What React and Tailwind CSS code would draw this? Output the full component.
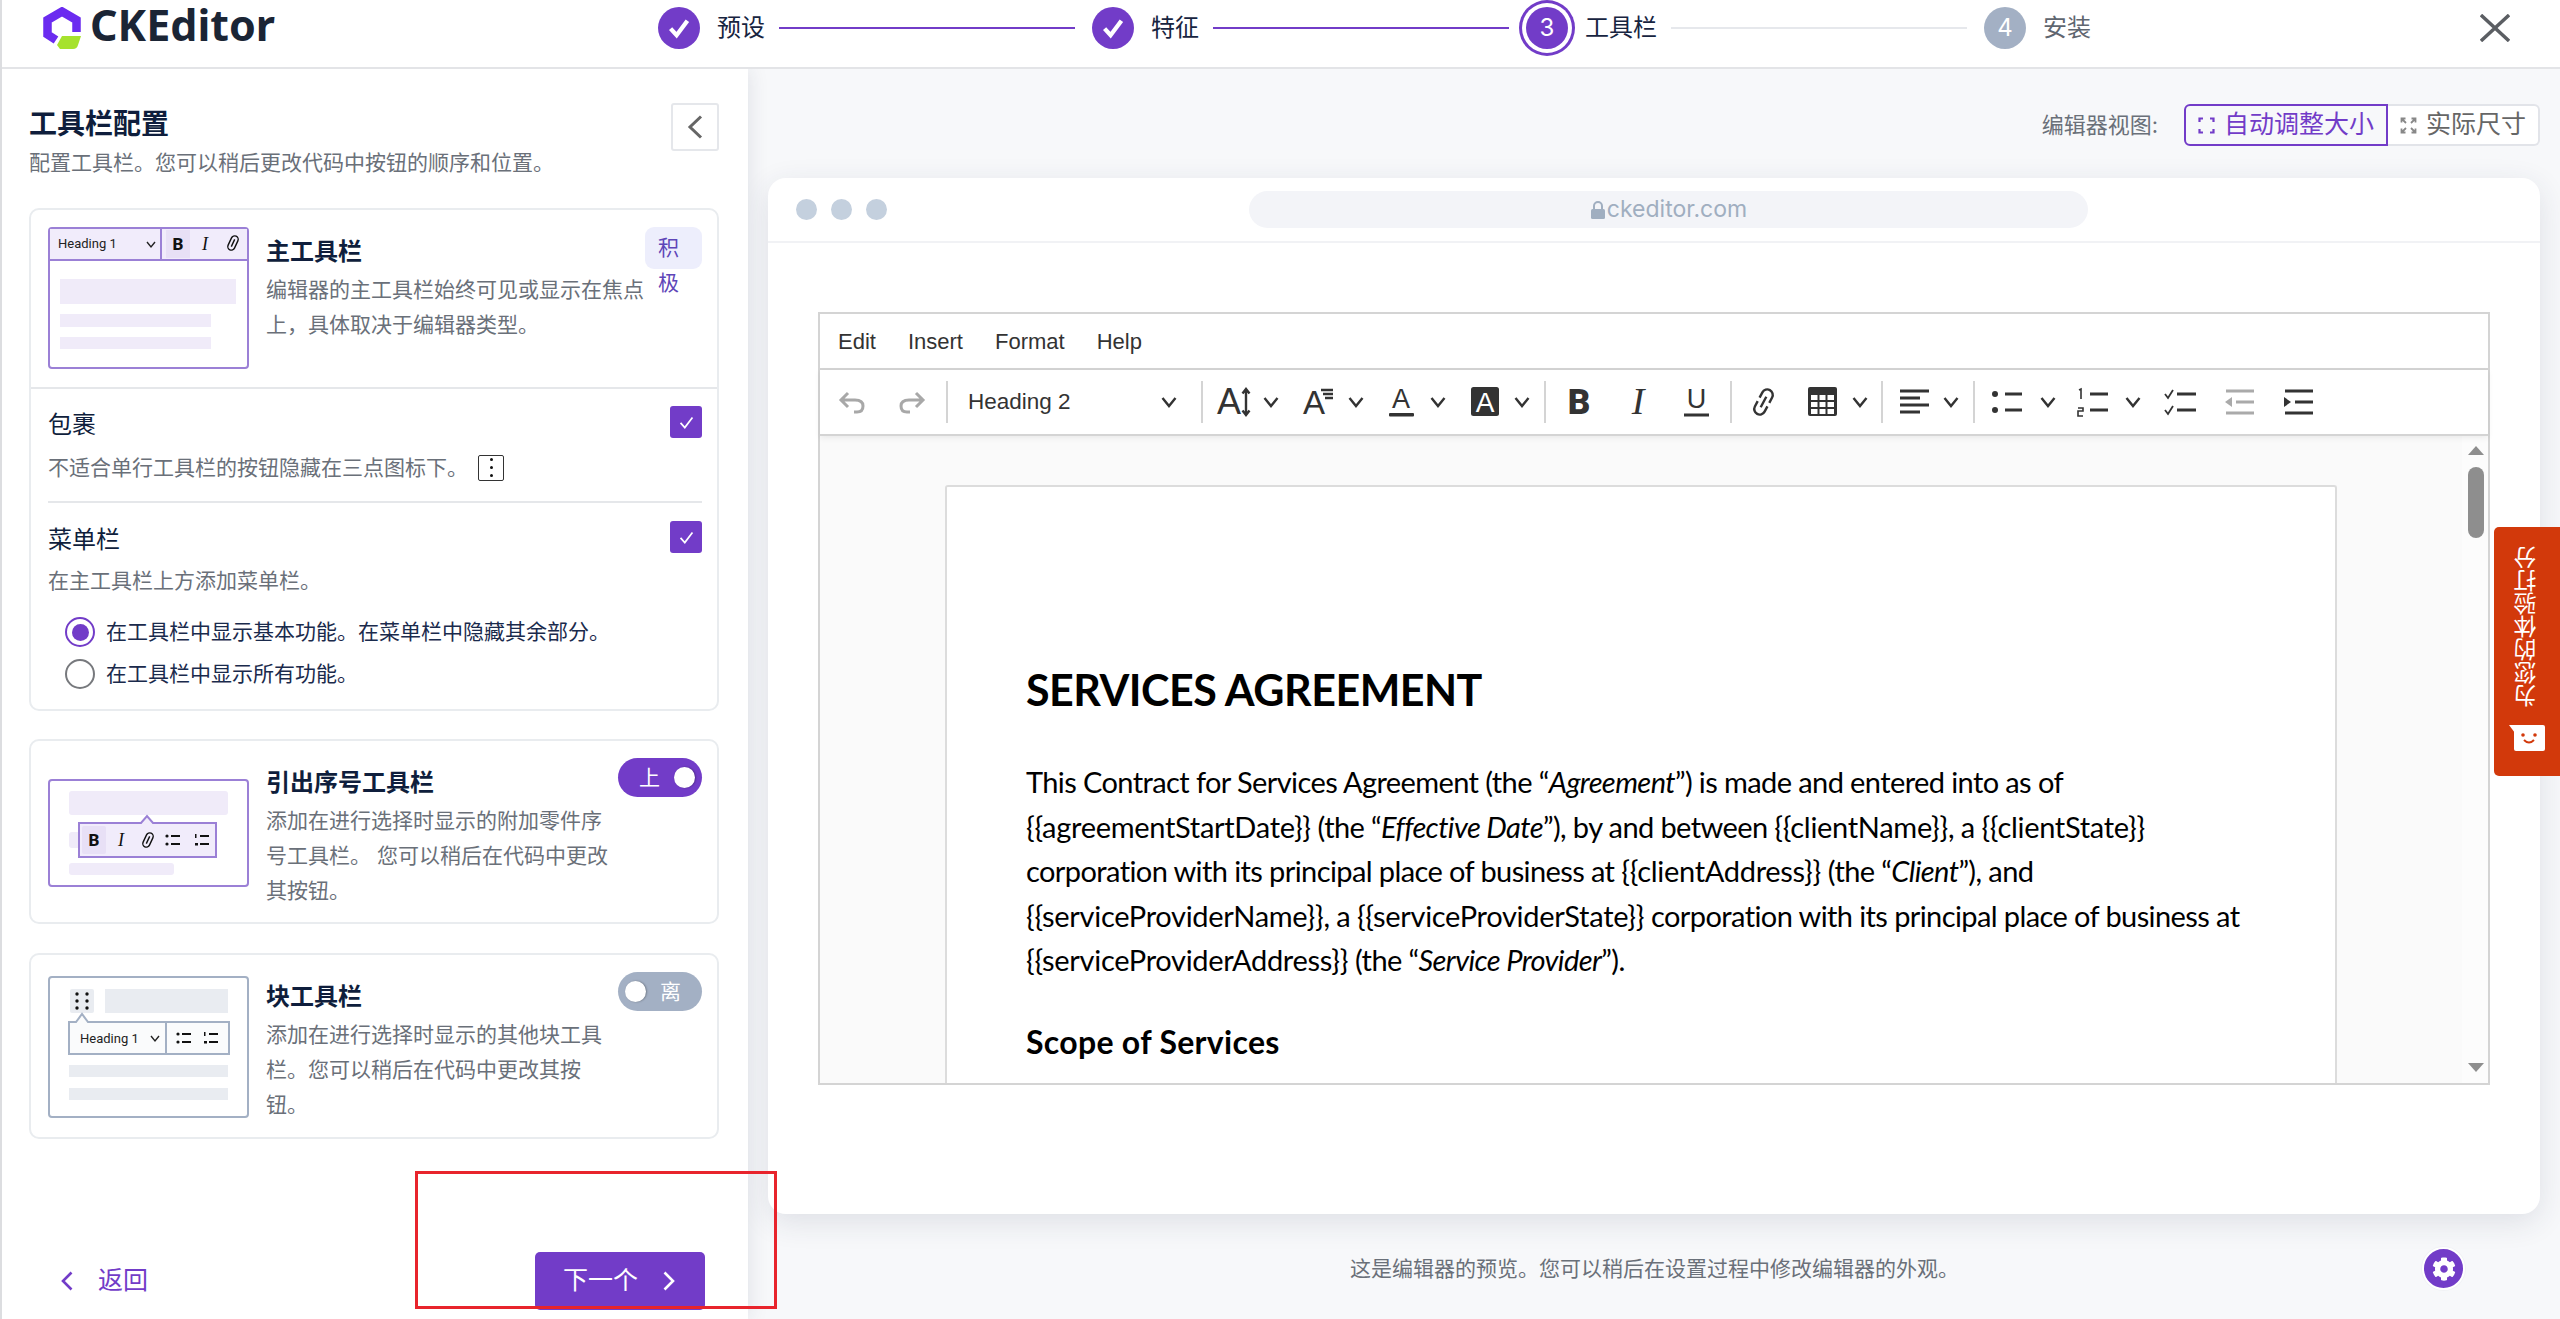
import { FaCog } from 'react-icons/fa'

const FONT = "font-['Inter','Noto_Sans_CJK_SC',sans-serif]"

function Chev({ className = '' }) {
  return (
    <svg width="16" height="30" viewBox="0 0 16 30" fill="none" className={className}>
      <path d="M1.5 11 L8 19 L14.5 11" stroke="#333" strokeWidth="2.4" />
    </svg>
  )
}

function Sep({ className = '' }) {
  return <div className={`w-[2px] h-[42px] bg-[#d4d4d4] shrink-0 ${className}`} />
}

function Ic({ w, className = '', children }) {
  return (
    <svg width={w} height="30" viewBox={`0 0 ${w} 30`} fill="none" className={`shrink-0 overflow-visible ${className}`}>
      {children}
    </svg>
  )
}

function Check({ size = 20, stroke = 3 }) {
  return (
    <svg width={size} height={size} viewBox="0 0 20 20" fill="none">
      <path d="M3 10.5 L8 16 L17 4" stroke="#fff" strokeWidth={stroke} />
    </svg>
  )
}

function Logo() {
  return (
    <svg width="38" height="42" viewBox="0 0 38 42" fill="none" className="shrink-0">
      <path d="M13 33 L4.5 27.5 V13 L19 4.5 L33.5 13 V25" stroke="#6b2bf0" strokeWidth="8.5" />
      <path d="M19 29 H38 L35 38 Q34 42 30 42 H17 L14 38 Z" fill="#a6e22d" />
    </svg>
  )
}

function Step({ n, label, state, line }) {
  return (
    <div className="flex items-center shrink-0">
      {state === 'done' && (
        <div className="w-[42px] h-[42px] rounded-full bg-[#723cc8] flex items-center justify-center">
          <Check size={24} stroke={3.6} />
        </div>
      )}
      {state === 'active' && (
        <div className="w-[42px] h-[42px] rounded-full bg-[#723cc8] text-white text-[24px] flex items-center justify-center shadow-[0_0_0_4px_#fff,0_0_0_7px_#723cc8]">
          {n}
        </div>
      )}
      {state === 'todo' && (
        <div className="w-[42px] h-[42px] rounded-full bg-[#a3b0c4] text-white text-[24px] flex items-center justify-center">
          {n}
        </div>
      )}
      <span className={`ml-[17px] text-[24px] leading-[42px] ${state === 'todo' ? 'text-[#5f6670]' : 'text-[#172440]'}`}>{label}</span>
      {line && <div className={`ml-[14px] mr-[17px] w-[296px] h-[2px] ${line === 'on' ? 'bg-[#723cc8]' : 'bg-[#e6e8ec]'}`} />}
    </div>
  )
}

function Header() {
  return (
    <header className="h-[69px] shrink-0 bg-white border-b-2 border-[#e3e4e7] flex items-start pt-[7px] relative z-20">
      <div className="w-[658px] pl-[43px] flex items-center h-[42px] shrink-0">
        <Logo />
        <span className="ml-[9px] text-[43px] font-bold text-[#1b2535] leading-[42px] -mt-[6px] font-['Noto_Sans',sans-serif]">CKEditor</span>
      </div>
      <Step label="预设" state="done" line="on" />
      <Step label="特征" state="done" line="on" />
      <Step n="3" label="工具栏" state="active" line="off" />
      <Step n="4" label="安装" state="todo" />
      <svg width="30" height="28" viewBox="0 0 30 28" className="ml-[389px] mt-[7px] shrink-0" fill="none">
        <path d="M1 1 L29 27 M29 1 L1 27" stroke="#5b5e63" strokeWidth="3.4" />
      </svg>
    </header>
  )
}

function Tile({ w, h, color, children }) {
  return (
    <svg width={w} height={h} viewBox={`0 0 ${w} ${h}`} fill="none" className="shrink-0">
      <rect x="1" y="1" width={w - 2} height={h - 2} rx="3" fill="#fff" stroke={color} strokeWidth="2" />
      {children}
    </svg>
  )
}

const tileFont = { fontFamily: 'Roboto, sans-serif' }

function MiniB({ x, y }) {
  return <text x={x} y={y} fontSize="17" fontWeight="800" textAnchor="middle" fill="#111" style={tileFont}>B</text>
}
function MiniI({ x, y }) {
  return <text x={x} y={y} fontSize="18" fontStyle="italic" textAnchor="middle" fill="#111" style={{ fontFamily: 'Liberation Serif, serif' }}>I</text>
}
function MiniLink({ x, y }) {
  return (
    <g transform={`rotate(25 ${x} ${y})`} stroke="#111" strokeWidth="1.4">
      <rect x={x - 3.5} y={y - 7.5} width="7" height="15" rx="3.5" />
      <path d={`M${x} ${y - 4} V${y + 4}`} />
    </g>
  )
}
function MiniBullets({ x, y }) {
  return (
    <g fill="#111">
      <circle cx={x} cy={y - 4} r="1.6" />
      <circle cx={x} cy={y + 4} r="1.6" />
      <rect x={x + 4} y={y - 5} width="9" height="2" />
      <rect x={x + 4} y={y + 3} width="9" height="2" />
    </g>
  )
}
function MiniNums({ x, y }) {
  return (
    <g fill="#111">
      <rect x={x} y={y - 6} width="1.5" height="4" />
      <rect x={x} y={y + 3} width="3" height="2.5" />
      <rect x={x + 5} y={y - 5} width="9" height="2" />
      <rect x={x + 5} y={y + 3} width="9" height="2" />
    </g>
  )
}

function ThumbMain() {
  const c = '#9b80d6'
  return (
    <Tile w={201} h={142} color={c}>
      <path d="M2 2 H199 V32 H2 Z" fill="#f1ecfb" />
      <path d="M1 33 H200 M113 1 V33" stroke={c} strokeWidth="2" />
      <rect x="118" y="3" width="24" height="28" fill="#e8e0f6" />
      <text x="10" y="21" fontSize="13" fill="#222" style={tileFont}>Heading 1</text>
      <path d="M99 15 L103 20 L107 15" stroke="#222" strokeWidth="1.4" />
      <MiniB x={130} y={23} />
      <MiniI x={157} y={23} />
      <MiniLink x={185} y={16} />
      <rect x="12" y="52" width="176" height="25" fill="#f0ebf9" />
      <rect x="12" y="87" width="151" height="13" fill="#f0ebf9" />
      <rect x="12" y="110" width="151" height="12" fill="#f0ebf9" />
    </Tile>
  )
}

function ThumbBalloon() {
  const c = '#9b80d6'
  return (
    <Tile w={201} h={108} color={c}>
      <rect x="21" y="12" width="159" height="24" rx="3" fill="#f0ebf9" />
      <rect x="21" y="53" width="12" height="16" rx="3" fill="#f0ebf9" />
      <rect x="21" y="84" width="105" height="12" rx="3" fill="#f0ebf9" />
      <path d="M31 44 H93 L99 37 L105 44 H168 V78 H31 Z" fill="#f1ecfb" stroke={c} strokeWidth="2" />
      <rect x="34" y="47" width="24" height="28" rx="2" fill="#e8e0f6" />
      <MiniB x={46} y={67} />
      <MiniI x={73} y={67} />
      <MiniLink x={100} y={61} />
      <MiniBullets x={119} y={61} />
      <MiniNums x={147} y={61} />
    </Tile>
  )
}

function ThumbBlock() {
  const c = '#a3b0c4'
  return (
    <Tile w={201} h={142} color={c}>
      <rect x="22" y="13" width="24" height="24" rx="2" fill="#e9ecf1" />
      <g fill="#111">
        <circle cx="29" cy="18" r="1.7" />
        <circle cx="39" cy="18" r="1.7" />
        <circle cx="29" cy="25" r="1.7" />
        <circle cx="39" cy="25" r="1.7" />
        <circle cx="29" cy="32" r="1.7" />
        <circle cx="39" cy="32" r="1.7" />
      </g>
      <rect x="57" y="13" width="123" height="24" fill="#e9ecf1" />
      <path d="M21 46 H28 L34 38 L40 46 H181 V78 H21 Z" fill="#fafbfc" stroke={c} strokeWidth="2" />
      <path d="M118 46 V78" stroke={c} strokeWidth="2" />
      <text x="32" y="67" fontSize="13" fill="#222" style={tileFont}>Heading 1</text>
      <path d="M103 60 L107 65 L111 60" stroke="#222" strokeWidth="1.4" />
      <MiniBullets x={130} y={62} />
      <MiniNums x={156} y={62} />
      <rect x="21" y="89" width="159" height="12" fill="#e9ecf1" />
      <rect x="21" y="112" width="159" height="12" fill="#e9ecf1" />
    </Tile>
  )
}

function CheckBox() {
  return (
    <div className="w-[32px] h-[32px] rounded-[3px] bg-[#723cc8] flex items-center justify-center shrink-0">
      <Check size={17} stroke={2} />
    </div>
  )
}

function Toggle({ on }) {
  if (on) {
    return (
      <div className="ml-auto shrink-0 w-[84px] h-[39px] rounded-full bg-[#723cc8] flex items-center pl-[21px] text-white text-[21px]">
        <span>上</span>
        <span className="ml-[14px] w-[21px] h-[21px] rounded-full bg-white shadow-[1px_0_2px_rgba(0,0,0,0.3)]" />
      </div>
    )
  }
  return (
    <div className="ml-auto shrink-0 w-[84px] h-[39px] rounded-full bg-[#a3b0c4] flex items-center pl-[7px] text-white text-[21px]">
      <span className="w-[21px] h-[21px] rounded-full bg-white shadow-[1px_0_2px_rgba(0,0,0,0.3)]" />
      <span className="ml-[14px]">离</span>
    </div>
  )
}

function CardText({ title, children, className = 'w-[345px]' }) {
  return (
    <div className={`${className} pt-[7px] shrink-0`}>
      <div className="text-[24px] font-bold leading-[35px] text-[#0f1e3c]">{title}</div>
      <p className="mt-[3px] text-[21px] leading-[35px] text-[#6a7079]">{children}</p>
    </div>
  )
}

function Radio({ on, children }) {
  return (
    <div className="h-[42px] flex items-center ml-[17px] text-[21px] text-[#1a2a4c]">
      {on ? (
        <span className="w-[30px] h-[30px] rounded-full border-2 border-[#723cc8] flex items-center justify-center shrink-0">
          <span className="w-[17px] h-[17px] rounded-full bg-[#723cc8]" />
        </span>
      ) : (
        <span className="w-[30px] h-[30px] rounded-full border-2 border-[#77797d] shrink-0" />
      )}
      <span className="ml-[11px]">{children}</span>
    </div>
  )
}

function Aside() {
  return (
    <aside className="w-[748px] shrink-0 bg-white flex flex-col relative z-10 shadow-[0_0_20px_rgba(30,40,70,0.12)]">
      <div className="px-[29px] pt-[34px]">
        <div className="flex justify-between items-start">
          <div>
            <h1 className="mt-[4px] text-[28px] font-bold leading-[34px] text-[#0f1e3c]">工具栏配置</h1>
            <p className="mt-[8px] text-[21px] leading-[28px] text-[#6a7079]">配置工具栏。您可以稍后更改代码中按钮的顺序和位置。</p>
          </div>
          <button className="w-[48px] h-[48px] border-2 border-[#e5e7eb] rounded-[3px] flex items-center justify-center">
            <svg width="16" height="24" viewBox="0 0 16 24" fill="none">
              <path d="M14 1.5 L3 12 L14 22.5" stroke="#666" strokeWidth="3" />
            </svg>
          </button>
        </div>

        {/* main toolbar */}
        <div className="mt-[31px] border-2 border-[#e9ecef] rounded-[10px]">
          <div className="h-[179px] pl-[17px] pt-[17px] pr-[15px] flex gap-[17px] border-b-2 border-[#e5e7ea]">
            <ThumbMain />
            <CardText title="主工具栏" className="w-[378px]">编辑器的主工具栏始终可见或显示在焦点上，具体取决于编辑器类型。</CardText>
            <div className="-ml-[16px] w-[57px] h-[42px] shrink-0 rounded-[9px] bg-[#edeefc] px-[13px] pt-[3px] text-[21px] leading-[35px] text-[#5e46b8]">积极</div>
          </div>
          <div className="pl-[17px] pr-[15px] pt-[17px]">
            <div className="flex justify-between items-start">
              <span className="text-[24px] leading-[38px] text-[#0f1e3c]">包裹</span>
              <CheckBox />
            </div>
            <div className="mt-[6px] h-[35px] flex items-center text-[21px] text-[#6a7079]">
              不适合单行工具栏的按钮隐藏在三点图标下。
              <span className="ml-[10px] w-[26px] h-[26px] border border-[#333] rounded-[2px] flex flex-col items-center justify-center gap-[5px]">
                <span className="w-[3px] h-[3px] rounded-full bg-[#111]" />
                <span className="w-[3px] h-[3px] rounded-full bg-[#111]" />
                <span className="w-[3px] h-[3px] rounded-full bg-[#111]" />
              </span>
            </div>
            <div className="mt-[16px] border-t-2 border-[#e5e7ea]" />
          </div>
          <div className="pl-[17px] pr-[15px] pt-[18px] pb-[14px]">
            <div className="flex justify-between items-start">
              <span className="text-[24px] leading-[38px] text-[#0f1e3c]">菜单栏</span>
              <CheckBox />
            </div>
            <p className="mt-[4px] text-[21px] leading-[35px] text-[#6a7079]">在主工具栏上方添加菜单栏。</p>
            <div className="mt-[13px]">
              <Radio on>在工具栏中显示基本功能。在菜单栏中隐藏其余部分。</Radio>
              <Radio>在工具栏中显示所有功能。</Radio>
            </div>
          </div>
        </div>

        <div className="mt-[28px] border-2 border-[#e9ecef] rounded-[10px] pl-[17px] pr-[15px] pt-[17px] pb-[15px] flex gap-[17px] items-center h-[185px]">
          <ThumbBalloon />
          <div className="self-start flex-1 flex">
            <CardText title="引出序号工具栏">添加在进行选择时显示的附加零件序号工具栏。 您可以稍后在代码中更改其按钮。</CardText>
            <Toggle on />
          </div>
        </div>

        <div className="mt-[29px] border-2 border-[#e9ecef] rounded-[10px] pl-[17px] pr-[15px] pt-[17px] pb-[15px] flex gap-[17px] items-center h-[186px]">
          <ThumbBlock />
          <div className="self-start flex-1 flex">
            <CardText title="块工具栏">添加在进行选择时显示的其他块工具栏。您可以稍后在代码中更改其按钮。</CardText>
            <Toggle />
          </div>
        </div>
      </div>

      <div className="mt-auto pl-[61px] pr-[43px] pb-[9px] flex items-center justify-between">
        <div className="flex items-center text-[#723cc8] text-[25px]">
          <svg width="12" height="20" viewBox="0 0 12 20" fill="none">
            <path d="M10.5 1.5 L2 10 L10.5 18.5" stroke="#723cc8" strokeWidth="2.6" />
          </svg>
          <span className="ml-[25px]">返回</span>
        </div>
        <button className="w-[170px] h-[58px] rounded-[5px] bg-[#723cc8] text-white text-[25px] flex items-center pl-[28px]">
          下一个
          <svg width="12" height="20" viewBox="0 0 12 20" fill="none" className="ml-[25px]">
            <path d="M1.5 1.5 L10 10 L1.5 18.5" stroke="#fff" strokeWidth="2.6" />
          </svg>
        </button>
      </div>
    </aside>
  )
}

function EditorToolbar() {
  const text = { fontFamily: 'Liberation Sans, sans-serif' }
  const dark = '#333'
  return (
    <div className="h-[66px] flex items-center pl-[18px] border-b-2 border-[#d4d4d4] shadow-[0_2px_6px_rgba(0,0,0,0.07)] relative z-10 bg-white">
      <Ic w={28}>
        <path d="M3 13 H17 Q25 13 25 19 Q25 25 19 25 H16 M10 6 L3 13 L10 20" stroke="#a8a8a8" strokeWidth="3" />
      </Ic>
      <Ic w={30} className="ml-[30px]">
        <path d="M27 13 H13 Q5 13 5 19 Q5 25 11 25 H14 M20 6 L27 13 L20 20" stroke="#a8a8a8" strokeWidth="3" />
      </Ic>
      <Sep className="ml-[20px]" />
      <span className="ml-[20px] w-[193px] shrink-0 text-[22.5px] text-[#333] font-['Liberation_Sans',sans-serif]">Heading 2</span>
      <Chev />
      <Sep className="ml-[24px]" />
      <Ic w={36} className="ml-[14px]">
        <text x="0" y="27" fontSize="36" fill={dark} style={text}>A</text>
        <path d="M29 3 V27 M25.5 6.5 L29 2 L32.5 6.5 M25.5 23.5 L29 28 L32.5 23.5" stroke={dark} strokeWidth="2.4" />
      </Ic>
      <Chev className="ml-[10px]" />
      <Ic w={30} className="ml-[24px]">
        <text x="0" y="27" fontSize="33" fill={dark} style={text}>A</text>
        <path d="M18 3 H30 M20 7 H30 M22 11 H30" stroke={dark} strokeWidth="2.4" />
      </Ic>
      <Chev className="ml-[15px]" />
      <Ic w={25} className="ml-[25px]">
        <text x="3" y="21" fontSize="27" fill={dark} style={text}>A</text>
        <rect x="0" y="26" width="25" height="3.4" rx="1" fill={dark} />
      </Ic>
      <Chev className="ml-[16px]" />
      <Ic w={28} className="ml-[25px]">
        <rect x="0" y="0" width="28" height="29" rx="2.5" fill={dark} />
        <text x="14" y="25" fontSize="28" textAnchor="middle" fill="#fff" style={text}>A</text>
      </Ic>
      <Chev className="ml-[15px]" />
      <Sep className="ml-[14px]" />
      <Ic w={24} className="ml-[21px]">
        <text x="12" y="27" fontSize="35" fontWeight="900" textAnchor="middle" fill={dark} style={{ fontFamily: 'Roboto, sans-serif' }}>B</text>
      </Ic>
      <Ic w={24} className="ml-[35px]">
        <text x="12" y="27" fontSize="38" fontStyle="italic" textAnchor="middle" fill={dark} style={{ fontFamily: 'Liberation Serif, serif' }}>I</text>
      </Ic>
      <Ic w={25} className="ml-[34px]">
        <text x="12.5" y="21" fontSize="27" textAnchor="middle" fill={dark} style={text}>U</text>
        <rect x="0" y="26.5" width="25" height="3" fill={dark} />
      </Ic>
      <Sep className="ml-[21px]" />
      <Ic w={25} className="ml-[19px]">
        <g transform="rotate(28 12.5 15)" stroke={dark} strokeWidth="2.4">
          <path d="M7 13 V7 a5.5 5.5 0 0 1 11 0 V13 M18 17 V23 a5.5 5.5 0 0 1 -11 0 V17 M12.5 9 V21" />
        </g>
      </Ic>
      <Ic w={29} className="ml-[32px]">
        <rect x="0" y="0" width="29" height="29" rx="2" fill={dark} />
        <g fill="#fff">
          <rect x="3" y="8" width="6.5" height="5" />
          <rect x="11.5" y="8" width="6" height="5" />
          <rect x="19.5" y="8" width="6.5" height="5" />
          <rect x="3" y="15" width="6.5" height="5" />
          <rect x="11.5" y="15" width="6" height="5" />
          <rect x="19.5" y="15" width="6.5" height="5" />
          <rect x="3" y="22" width="6.5" height="5" />
          <rect x="11.5" y="22" width="6" height="5" />
          <rect x="19.5" y="22" width="6.5" height="5" />
        </g>
      </Ic>
      <Chev className="ml-[15px]" />
      <Sep className="ml-[13px]" />
      <Ic w={29} className="ml-[17px]">
        <path d="M0 4 H29 M0 11 H20 M0 18 H29 M0 25 H20" stroke={dark} strokeWidth="3" />
      </Ic>
      <Chev className="ml-[14px]" />
      <Sep className="ml-[14px]" />
      <Ic w={30} className="ml-[17px]">
        <circle cx="3" cy="7" r="3" fill={dark} />
        <circle cx="3" cy="23" r="3" fill={dark} />
        <path d="M13 7 H30 M13 23 H30" stroke={dark} strokeWidth="3" />
      </Ic>
      <Chev className="ml-[18px]" />
      <Ic w={30} className="ml-[22px]">
        <path d="M1 3 L3 2 V12 M0 21 H5 V24 H0 V29 H5" stroke={dark} strokeWidth="1.6" />
        <path d="M12 7 H30 M12 23 H30" stroke={dark} strokeWidth="3" />
      </Ic>
      <Chev className="ml-[17px]" />
      <Ic w={32} className="ml-[23px]">
        <path d="M1 7 L4 11 L9 3 M1 23 L4 27 L9 19" stroke={dark} strokeWidth="1.8" />
        <path d="M13 7 H32 M13 23 H32" stroke={dark} strokeWidth="3" />
      </Ic>
      <Ic w={30} className="ml-[29px]">
        <path d="M1 4 H29 M1 26 H29 M11 15 H29" stroke="#aaa" strokeWidth="3" />
        <path d="M0 15 L7 10 V20 Z" fill="#aaa" />
      </Ic>
      <Ic w={30} className="ml-[29px]">
        <path d="M1 4 H29 M1 26 H29 M11 15 H29" stroke={dark} strokeWidth="3" />
        <path d="M7 15 L0 10 V20 Z" fill={dark} />
      </Ic>
    </div>
  )
}

function Ph({ children }) {
  return <span className="tracking-[-0.3px]">{'{{'}{children}{'}}'}</span>
}

function Document() {
  return (
    <div className="ml-[125px] mt-[49px] w-[1392px] h-[640px] shrink-0 bg-white border-2 border-b-0 border-[#dcdcdc] rounded-t-[3px] pl-[79px] pt-[173px] text-black font-['Lato',sans-serif]">
      <h2 className="text-[43px] font-bold leading-[60px] tracking-[-0.5px]">SERVICES AGREEMENT</h2>
      <p className="mt-[40px] w-[1240px] text-[29px] leading-[44.6px] tracking-[-0.6px]">
        This Contract for Services Agreement (the “<em>Agreement</em>”) is made and entered into as of <Ph>agreementStartDate</Ph> (the “<em>Effective Date</em>”), by and between <Ph>clientName</Ph>, a <Ph>clientState</Ph> corporation with its principal place of business at <Ph>clientAddress</Ph> (the “<em>Client</em>”), and <Ph>serviceProviderName</Ph>, a <Ph>serviceProviderState</Ph> corporation with its principal place of business at <Ph>serviceProviderAddress</Ph> (the “<em>Service Provider</em>”).
      </p>
      <h3 className="mt-[37px] text-[32px] font-bold leading-[44px] tracking-[0.3px]">Scope of Services</h3>
    </div>
  )
}

function Editor() {
  return (
    <div className="mx-[50px] mt-[69px] h-[773px] border-2 border-[#d4d4d4] flex flex-col font-['Liberation_Sans',sans-serif]">
      <div className="h-[56px] shrink-0 border-b-2 border-[#d4d4d4] flex items-center gap-[32px] pl-[18px] text-[22px] text-[#333]">
        <span>Edit</span>
        <span>Insert</span>
        <span>Format</span>
        <span>Help</span>
      </div>
      <EditorToolbar />
      <div className="flex-1 flex min-h-0 bg-[#fafafa] overflow-hidden">
        <div className="flex-1 min-w-0">
          <Document />
        </div>
        <div className="w-[26px] shrink-0 bg-[#fcfcfc] flex flex-col items-center pl-[2px] pt-[10px] pb-[11px]">
          <svg width="16" height="9" viewBox="0 0 16 9">
            <path d="M8 0 L16 9 H0 Z" fill="#8e8e8e" />
          </svg>
          <div className="mt-[12px] w-[16px] h-[71px] rounded-full bg-[#8e8e8e]" />
          <svg width="16" height="9" viewBox="0 0 16 9" className="mt-auto">
            <path d="M8 9 L16 0 H0 Z" fill="#8e8e8e" />
          </svg>
        </div>
      </div>
    </div>
  )
}

function Preview() {
  return (
    <div className="h-[1036px] shrink-0 rounded-[18px] bg-white shadow-[0_8px_30px_rgba(40,50,80,0.12)]">
      <div className="h-[65px] flex items-start pt-[13px] pl-[28px] border-b-2 border-[#f1f2f5]">
        <span className="mt-[8px] w-[21px] h-[21px] rounded-full bg-[#c4d0de]" />
        <span className="mt-[8px] ml-[14px] w-[21px] h-[21px] rounded-full bg-[#c4d0de]" />
        <span className="mt-[8px] ml-[14px] w-[21px] h-[21px] rounded-full bg-[#c4d0de]" />
        <div className="ml-[362px] w-[839px] h-[37px] rounded-full bg-[#f3f4f8] flex items-center justify-center text-[23px] text-[#a0aec0]">
          <svg width="16" height="20" viewBox="0 0 16 20" fill="none" className="mr-[1px]">
            <rect x="1" y="9" width="14" height="10" rx="1.5" fill="#a0aec0" />
            <path d="M4 9 V6 a4 4 0 0 1 8 0 V9" stroke="#a0aec0" strokeWidth="2" />
          </svg>
          ckeditor.com
        </div>
      </div>
      <Editor />
    </div>
  )
}

function ViewSwitch() {
  return (
    <div className="h-[109px] shrink-0 flex items-start justify-end pt-[35px]">
      <span className="mt-[6px] text-[22px] leading-[30px] text-[#6a7079]">编辑器视图:</span>
      <div className="ml-[26px] h-[42px] w-[204px] rounded-l-[6px] border-2 border-[#723cc8] flex items-center justify-center gap-[9px] text-[25px] text-[#723cc8]">
        <svg width="17" height="17" viewBox="0 0 17 17" fill="none">
          <path d="M5 1.5 H1.5 V5 M12 1.5 H15.5 V5 M1.5 12 V15.5 H5 M15.5 12 V15.5 H12" stroke="#723cc8" strokeWidth="2.2" />
        </svg>
        自动调整大小
      </div>
      <div className="h-[42px] w-[152px] rounded-r-[6px] border-2 border-l-0 border-[#e2e4e9] bg-white flex items-center justify-center gap-[9px] text-[25px] text-[#666]">
        <svg width="17" height="17" viewBox="0 0 17 17" fill="none">
          <path d="M1.5 1.5 L6 6 M1.5 5.5 V1.5 H5.5 M15.5 1.5 L11 6 M11.5 1.5 H15.5 V5.5 M1.5 15.5 L6 11 M1.5 11.5 V15.5 H5.5 M15.5 15.5 L11 11 M15.5 11.5 V15.5 H11.5" stroke="#888" strokeWidth="1.8" />
        </svg>
        实际尺寸
      </div>
    </div>
  )
}

function Feedback() {
  return (
    <div className="absolute right-0 top-[527px] w-[66px] h-[249px] rounded-l-[5px] bg-[#d2390b] flex flex-col items-center justify-start pt-[19px] pr-[1px] z-30">
      <span className="[writing-mode:vertical-rl] rotate-180 text-[23px] leading-[24px] text-white">为您的体验打分</span>
      <svg width="36" height="26" viewBox="0 0 36 26" className="mt-[18px]">
        <path d="M0 0 H12 V8 H6 Z" fill="#fff" />
        <rect x="5" y="0" width="31" height="26" rx="2" fill="#fff" />
        <circle cx="14" cy="10" r="1.8" fill="#d2390b" />
        <circle cx="26" cy="10" r="1.8" fill="#d2390b" />
        <path d="M15 15 Q20 20 25 15" stroke="#d2390b" strokeWidth="2" fill="none" />
      </svg>
    </div>
  )
}

export default function App() {
  return (
    <div className={`relative w-[2560px] h-[1319px] overflow-hidden bg-[#f7f8fa] flex flex-col ${FONT}`}>
      <Header />
      <div className="flex-1 flex min-h-0">
        <Aside />
        <main className="flex-1 min-w-0 flex flex-col pl-[20px] pr-[20px]">
          <ViewSwitch />
          <Preview />
          <div className="flex-1 flex items-center pt-[4px] pl-[582px] pr-[75px]">
            <span className="text-[21px] text-[#6a7079]">这是编辑器的预览。您可以稍后在设置过程中修改编辑器的外观。</span>
            <div className="ml-auto w-[43px] h-[43px] rounded-full bg-[#723cc8] border-2 border-white flex items-center justify-center shadow-[0_0_0_1px_#f1f2f5]">
              <FaCog size={24} color="#fff" />
            </div>
          </div>
        </main>
      </div>
      <Feedback />
      <div className="absolute left-0 top-0 w-[2px] h-full bg-[#dcdde0] z-30" />
      <div className="absolute left-[415px] top-[1171px] w-[362px] h-[138px] border-[3px] border-[#e8242c] z-30 pointer-events-none" />
    </div>
  )
}
